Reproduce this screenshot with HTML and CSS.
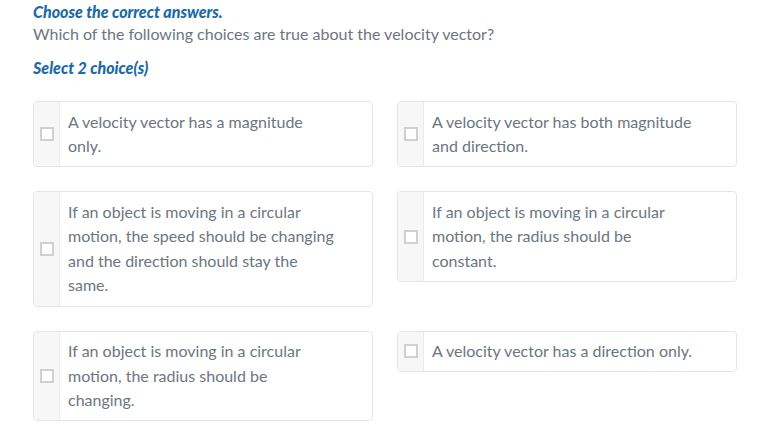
FILE: index.html
```html
<!DOCTYPE html>
<html lang="en">
<head>
    <meta charset="UTF-8" />
    <meta name="viewport" content="width=device-width, initial-scale=1" />
    <title>Velocity vector question</title>
    <link rel="stylesheet" href="styles.css">
</head>
<body>
    <div class="question">
        <h2 class="instruction">Choose the correct answers.</h2>
        <p class="prompt">Which of the following choices are true about the velocity vector?</p>
        <h3 class="select-note">Select 2 choice(s)</h3>

        <div class="choices">
            <label class="choice">
                <span class="choice-box"><span class="checkbox"></span></span>
                <span class="choice-text">A velocity vector has a magnitude only.</span>
            </label>
            <label class="choice">
                <span class="choice-box"><span class="checkbox"></span></span>
                <span class="choice-text">A velocity vector has both magnitude and direction.</span>
            </label>
            <label class="choice">
                <span class="choice-box"><span class="checkbox"></span></span>
                <span class="choice-text">If an object is moving in a circular motion, the speed should be changing and the direction should stay the same.</span>
            </label>
            <label class="choice">
                <span class="choice-box"><span class="checkbox"></span></span>
                <span class="choice-text">If an object is moving in a circular motion, the radius should be constant.</span>
            </label>
            <label class="choice">
                <span class="choice-box"><span class="checkbox"></span></span>
                <span class="choice-text">If an object is moving in a circular motion, the radius should be changing.</span>
            </label>
            <label class="choice">
                <span class="choice-box"><span class="checkbox"></span></span>
                <span class="choice-text">A velocity vector has a direction only.</span>
            </label>
        </div>
    </div>
</body>
</html>
```

FILE: styles.css
```css
* {
    box-sizing: border-box;
    margin: 0;
    padding: 0;
}
body {
    font-family: 'Lato', 'Liberation Sans', sans-serif;
    background: #fff;
    color: #6b7681;
}
.question {
    padding: 2px 40px 0 33px;
}
.instruction,
.select-note {
    font-size: 16px;
    font-weight: 900;
    font-style: italic;
    color: #1c6aa6;
    line-height: 20px;
}
.prompt {
    font-size: 16px;
    line-height: 24px;
}
.select-note {
    margin-top: 10px;
    line-height: 24px;
}
.choices {
    display: grid;
    grid-template-columns: 340px 340px;
    column-gap: 24px;
    row-gap: 24px;
    align-items: start;
    margin-top: 21px;
}
.choice {
    display: flex;
    border: 1px solid #e5e5e5;
    border-radius: 4px;
    background: #fff;
    overflow: hidden;
    cursor: pointer;
}
.choice-box {
    flex: 0 0 26px;
    display: flex;
    align-items: center;
    justify-content: center;
    background: #f7f7f7;
    border-right: 1px solid #ececec;
}
.checkbox {
    width: 14px;
    height: 14px;
    border: 2px solid #d0d0d0;
    background: #fff;
}
.choice-text {
    display: block;
    width: 275px;
    padding: 7.5px 0 7.5px 8px;
    font-size: 16px;
    line-height: 24.6px;
}
```
